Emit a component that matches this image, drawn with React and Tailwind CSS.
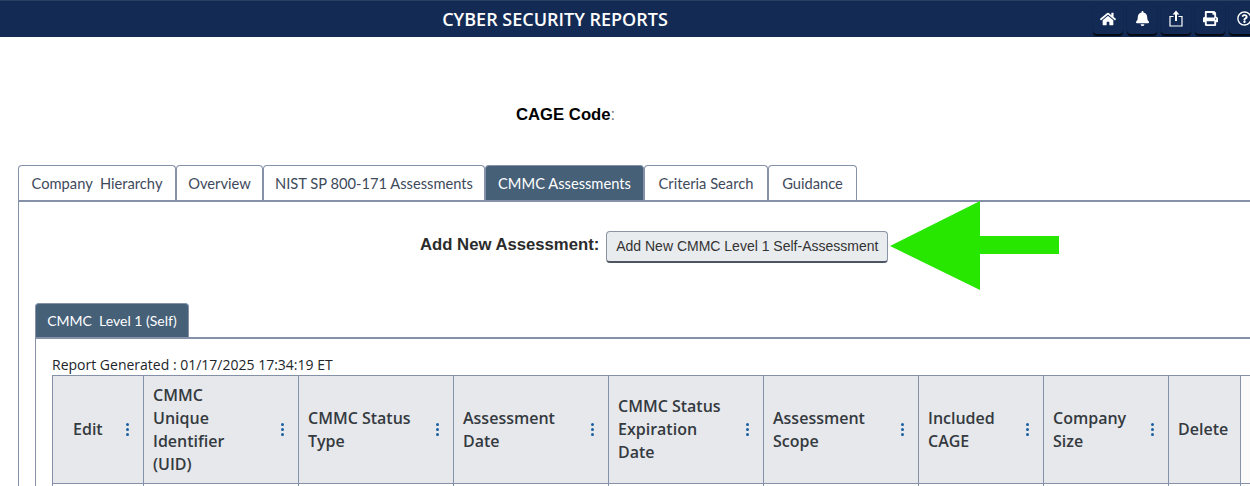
import React from 'react';
import { FaHome, FaBell, FaPrint, FaRegQuestionCircle } from 'react-icons/fa';

const tabs = [
    { label: 'Company  Hierarchy', w: 'w-[158px]' },
    { label: 'Overview', w: 'w-[87px]' },
    { label: 'NIST SP 800-171 Assessments', w: 'w-[222px]' },
    { label: 'CMMC Assessments', w: 'w-[159px]', active: true },
    { label: 'Criteria Search', w: 'w-[124px]' },
    { label: 'Guidance', w: 'w-[89px]' },
];

const columns = [
    { lines: ['Edit'], w: 'w-[91px]', center: true, menu: true },
    { lines: ['CMMC', 'Unique', 'Identifier', '(UID)'], w: 'w-[155px]', menu: true },
    { lines: ['CMMC Status', 'Type'], w: 'w-[155px]', menu: true },
    { lines: ['Assessment', 'Date'], w: 'w-[155px]', menu: true },
    { lines: ['CMMC Status', 'Expiration', 'Date'], w: 'w-[155px]', menu: true },
    { lines: ['Assessment', 'Scope'], w: 'w-[155px]', menu: true },
    { lines: ['Included', 'CAGE'], w: 'w-[125px]', menu: true },
    { lines: ['Company', 'Size'], w: 'w-[125px]', menu: true },
    { lines: ['Delete'], w: 'w-[72px]' },
];

const HeaderButton = ({ children }) => (
    <button className="w-[30px] h-[31px] shrink-0 rounded-[4px] bg-[#132b54] text-white flex items-center justify-center shadow-[0_2px_1px_rgba(0,0,0,0.8)]">
        {children}
    </button>
);

const Dots = () => (
    <span className="flex flex-col gap-[2px] shrink-0">
        <i className="block w-[3px] h-[3px] rounded-full bg-[#1a5fa0]"></i>
        <i className="block w-[3px] h-[3px] rounded-full bg-[#1a5fa0]"></i>
        <i className="block w-[3px] h-[3px] rounded-full bg-[#1a5fa0]"></i>
    </span>
);

const ShareIcon = () => (
    <svg width="14" height="17" viewBox="0 0 14 17" fill="none">
        <path d="M4.5 6.5H1V16H13V6.5H9.5" stroke="white" strokeWidth="1.2" />
        <path d="M7 11V2.5" stroke="white" strokeWidth="2" />
        <path d="M3.6 4.4L7 0.6L10.4 4.4Z" fill="white" />
    </svg>
);

const App = () => {
    return (
        <div className="relative w-[1250px] h-[486px] overflow-hidden bg-white font-['Open_Sans',sans-serif]">
            {/* Top bar */}
            <div className="h-[37px] bg-[#132b54] border-t border-[#2b3f5e] flex items-start pl-[17px] overflow-hidden">
                <div className="w-[1076px] shrink-0 text-center text-white text-[18px] font-semibold leading-[37px]">
                    CYBER SECURITY REPORTS
                </div>
                <div className="flex gap-[4px] pt-[2px] shrink-0">
                    <HeaderButton><FaHome size={16} /></HeaderButton>
                    <HeaderButton><FaBell size={15} /></HeaderButton>
                    <HeaderButton><ShareIcon /></HeaderButton>
                    <HeaderButton><FaPrint size={15} /></HeaderButton>
                    <HeaderButton><FaRegQuestionCircle size={15} /></HeaderButton>
                </div>
            </div>

            {/* Cage code */}
            <div className="h-[128px] pt-[68px] pl-[516px] font-['Liberation_Sans',sans-serif] text-[16.7px] leading-[20px] text-black">
                <b>CAGE Code</b><span className="text-[#777]">:</span>
            </div>

            {/* Main tabs */}
            <div className="pl-[18px] flex h-[35px] font-['Lato',sans-serif] text-[14.7px]">
                {tabs.map((t) => (
                    <div
                        key={t.label}
                        className={`${t.w} shrink-0 rounded-t-[4px] border border-b-0 border-[#8491a8] flex items-center justify-center whitespace-pre ${t.active ? 'bg-[#466078] text-white' : 'bg-white text-[#3e4a5c]'}`}
                    >
                        {t.label}
                    </div>
                ))}
            </div>

            {/* Panel */}
            <div className="ml-[18px] w-[1300px] h-[300px] border-l border-t-2 border-[#8491a8]">
                <div className="h-[101px] pl-[401px] pt-[29px] flex items-start gap-[7px]">
                    <span className="font-['Liberation_Sans',sans-serif] font-bold text-[16.7px] leading-[28px] text-[#2b2b2b]">Add New Assessment:</span>
                    <button className="w-[282px] h-[32px] rounded-[4px] border border-[#8a94a3] border-b-2 border-b-[#4d5563] bg-[#e9ecef] font-['Liberation_Sans',sans-serif] text-[14px] text-[#333]">
                        Add New CMMC Level 1 Self-Assessment
                    </button>
                </div>

                {/* Sub tab */}
                <div className="pl-[16px]">
                    <div className="w-[154px] h-[34px] rounded-t-[4px] bg-[#466078] border border-b-0 border-[#8491a8] text-white font-['Lato',sans-serif] text-[14px] flex items-center justify-center whitespace-pre">
                        CMMC  Level 1 (Self)
                    </div>
                </div>

                <div className="ml-[16px] border-l border-t-2 border-[#8491a8] pl-[16px] pt-[16px]">
                    <div className="text-[14px] leading-[20px] text-[#212529]">Report Generated : 01/17/2025 17:34:19 ET</div>
                    <div className="flex h-[109px] border-y border-[#8491a8] border-l">
                        {columns.map((c) => (
                            <div
                                key={c.lines[0] + c.w + c.lines.length}
                                className={`${c.w} shrink-0 bg-[#e7e8ec] border-r border-[#8491a8] flex items-center justify-between text-[16px] font-semibold leading-[23px] text-[#343a40] ${c.center ? 'pl-[20px]' : 'pl-[9px]'} pr-[14px]`}
                            >
                                <span className="whitespace-pre-line">{c.lines.join('\n')}</span>
                                {c.menu && <Dots />}
                            </div>
                        ))}
                        <div className="flex-1 bg-[#fafafa]"></div>
                    </div>
                    {/* First body row, cut off by the window */}
                    <div className="flex h-[20px] border-l border-[#8491a8]">
                        {columns.map((c) => (
                            <div key={c.lines[0] + c.w + c.lines.length} className={`${c.w} shrink-0 border-r border-[#8491a8]`}></div>
                        ))}
                    </div>
                </div>
            </div>

            {/* Green arrow callout */}
            <svg className="absolute left-[890px] top-[201px]" width="170" height="90" viewBox="0 0 170 90">
                <polygon points="0,45 90,0 90,35 169,35 169,53 90,53 90,89" fill="#27e600" />
            </svg>
        </div>
    );
};

export default App;
